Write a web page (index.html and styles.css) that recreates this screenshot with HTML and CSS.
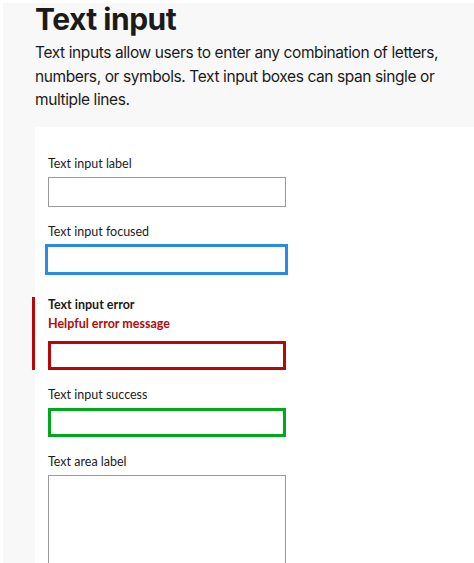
FILE: index.html
```html
<!DOCTYPE html>
<html lang="en">
<head>
<meta charset="utf-8">
<title>Text input</title>
<link rel="stylesheet" href="styles.css">
</head>
<body>
<main class="page">
  <h1 class="title">Text input</h1>
  <p class="intro">Text inputs allow users to enter any combination of letters, numbers, or symbols. Text input boxes can span single or multiple lines.</p>
  <section class="panel">
    <div class="field">
      <label class="label" for="i1">Text input label</label>
      <input class="input" id="i1" type="text">
    </div>
    <div class="field">
      <label class="label" for="i2">Text input focused</label>
      <input class="input input-focus" id="i2" type="text">
    </div>
    <div class="field field-error">
      <label class="label label-bold" for="i3">Text input error</label>
      <span class="error-msg">Helpful error message</span>
      <input class="input input-error" id="i3" type="text">
    </div>
    <div class="field">
      <label class="label" for="i4">Text input success</label>
      <input class="input input-success" id="i4" type="text">
    </div>
    <div class="field">
      <label class="label" for="i5">Text area label</label>
      <textarea class="input textarea" id="i5"></textarea>
    </div>
  </section>
</main>
</body>
</html>
```
FILE: styles.css
```css
* { box-sizing: border-box; }
html, body { margin: 0; padding: 0; background: #fff; }
body { overflow: hidden; height: 563px; }
.page {
  margin: 3px 0 0 3px;
  padding: 1px 0 0 32px;
  background: #f8f8f8;
  min-height: 560px;
  color: #1b1b1b;
}
.title {
  margin: 0;
  font-family: Inter, "Noto Sans", sans-serif;
  font-weight: 700;
  font-size: 30px;
  line-height: 30px;
  letter-spacing: -0.5px;
}
.intro {
  margin: 7px 0 0 0;
  font-family: Inter, "Noto Sans", sans-serif;
  font-size: 15.5px;
  line-height: 23.5px;
  letter-spacing: -0.4px;
  padding-right: 0;
}
.panel {
  margin-top: 15px;
  background: #fff;
  padding: 29px 0 0 13px;
  display: flex;
  flex-direction: column;
}
.field {
  display: flex;
  flex-direction: column;
  align-items: flex-start;
  margin-bottom: 17px;
}
.label {
  font-family: Lato, "Noto Sans", sans-serif;
  font-size: 12.5px;
  line-height: 16px;
  color: #1b1b1b;
  margin-bottom: 5px;
}
.label-bold { font-weight: 700; margin-bottom: 3px; }
.error-msg {
  font-family: Lato, "Noto Sans", sans-serif;
  font-weight: 700;
  font-size: 12.5px;
  line-height: 16px;
  color: #b50909;
  margin-bottom: 9px;
}
.input {
  display: block;
  width: 238px;
  height: 30px;
  margin: 0;
  border: 1px solid #9b9b9b;
  border-radius: 0;
  background: #fff;
  outline: none;
  padding: 0 8px;
}
.input-focus {
  width: 243px;
  height: 31px;
  margin: -1px 0 0 -3px;
  border: 3px solid #2a8ae6;
}
.field-error {
  margin-left: -16px;
  border-left: 3px solid #b50909;
  padding-left: 13px;
  margin-top: 5px;
}
.input-error { height: 29px; border: 3px solid #b50909; }
.input-success { height: 29px; border: 3px solid #00a91c; }
.textarea {
  height: 160px;
  resize: none;
}
```
